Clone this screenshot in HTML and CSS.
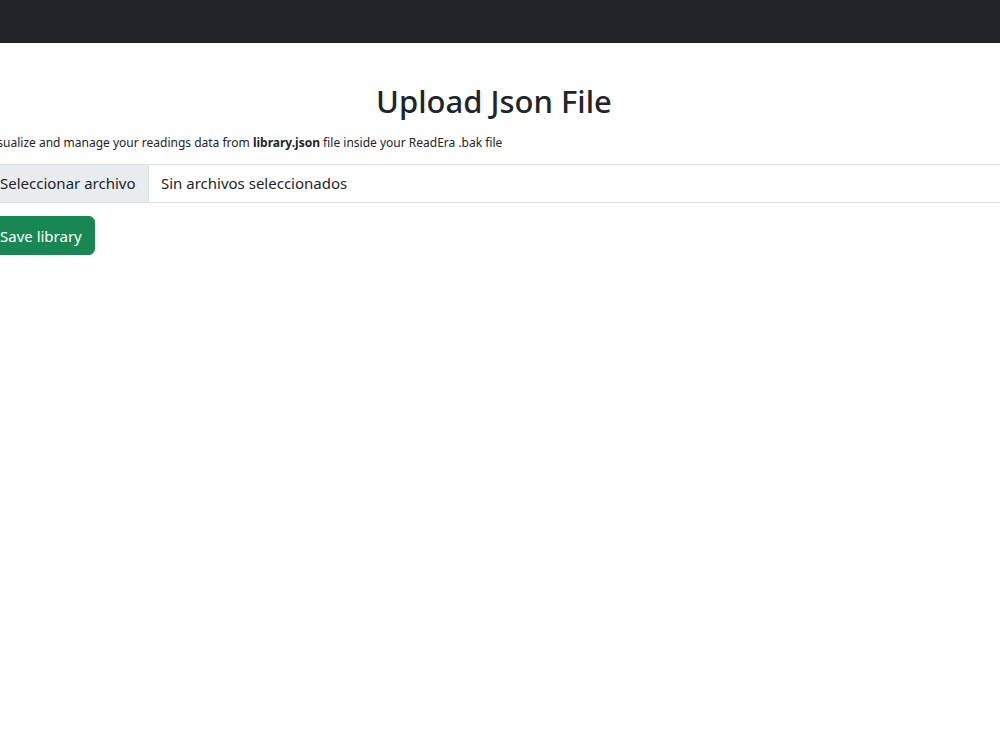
FILE: index.html
```html
<!DOCTYPE html>
<html lang="en">
<head>
<meta charset="utf-8">
<title>Upload Json File</title>
<link rel="stylesheet" href="styles.css">
</head>
<body>
<nav class="navbar"></nav>
<main class="page">
  <h2 class="title">Upload Json File</h2>
  <p class="lead-text">Visualize and manage your readings data from <strong>library.json</strong> file inside your ReadEra .bak file</p>
  <div class="file-input">
    <span class="file-btn">Seleccionar archivo</span>
    <span class="file-name">Sin archivos seleccionados</span>
  </div>
  <button class="btn-save" type="button">Save library</button>
</main>
</body>
</html>
```
FILE: styles.css
```css
html, body {
  margin: 0;
  padding: 0;
  background: #fff;
  overflow: hidden;
}
body {
  font-family: "Noto Sans", "Open Sans", sans-serif;
  color: #212529;
  width: 1000px;
  height: 750px;
}
.navbar {
  height: 43px;
  background: #212529;
}
.page {
  margin: 0 -1px 0 -13px;
  padding-top: 40px;
}
.title {
  margin: 0 0 13px;
  text-align: center;
  font-size: 31px;
  font-weight: 500;
  line-height: 36px;
  color: #212529;
}
.lead-text {
  margin: 0 0 11px;
  font-size: 12px;
  line-height: 21px;
  color: #212529;
}
.lead-text strong {
  font-weight: 700;
}
.file-input {
  display: flex;
  height: 39px;
  margin-right: -8px;
  box-sizing: border-box;
  border: 1px solid #dee2e6;
  border-radius: 6px;
  font-size: 15px;
  line-height: 24px;
}
.file-btn {
  background: #e9ecef;
  padding: 6px 12px;
  border-right: 1px solid #dee2e6;
  width: 161px;
  box-sizing: border-box;
  white-space: nowrap;
}
.file-name {
  padding: 6px 12px;
  white-space: nowrap;
}
.btn-save {
  display: block;
  margin-top: 13px;
  height: 39px;
  padding: 6px 12px;
  border: 1px solid #198754;
  border-radius: 6px;
  background: #198754;
  color: #fff;
  font-family: inherit;
  font-size: 15px;
  line-height: 24px;
  cursor: pointer;
}
```
